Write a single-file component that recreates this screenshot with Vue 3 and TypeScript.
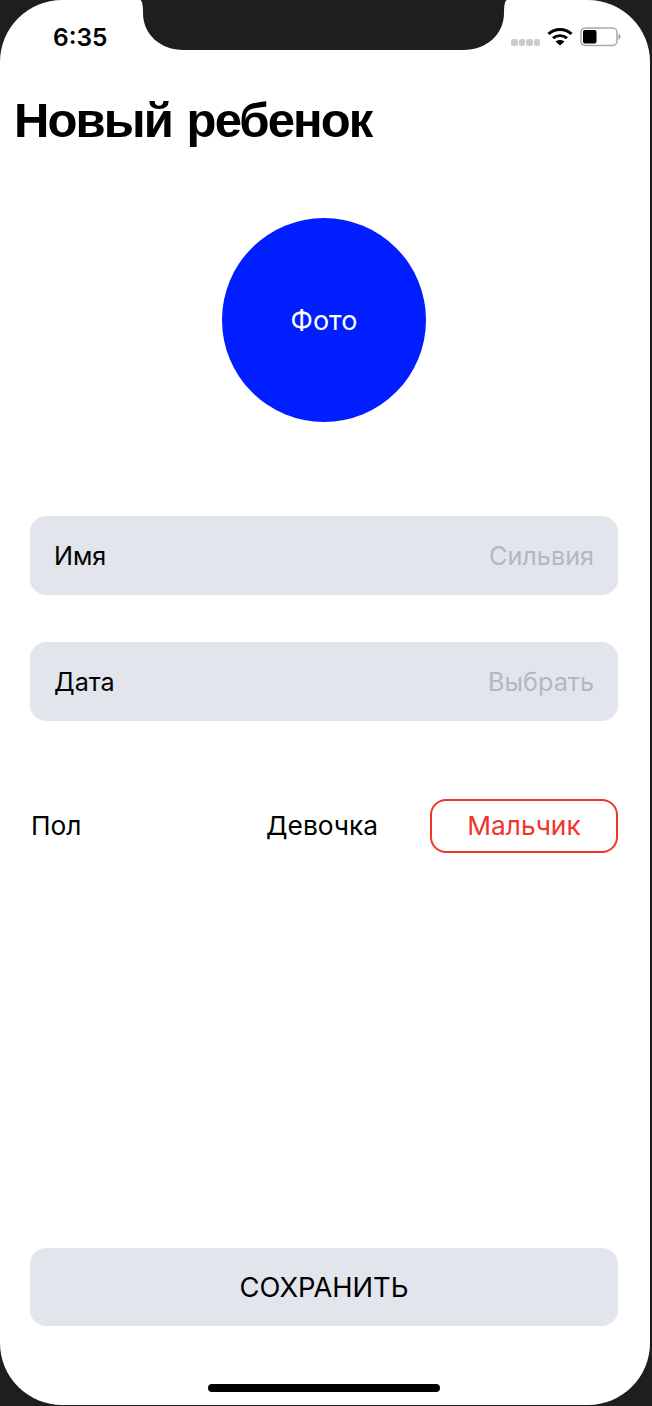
<script setup lang="ts">
interface Field {
  label: string
  hint: string
}

const fields: Field[] = [
  { label: 'Имя', hint: 'Сильвия' },
  { label: 'Дата', hint: 'Выбрать' }
]
</script>

<template>
  <div class="phone">
    <div class="screen">
      <header class="status">
        <span class="time">6:35</span>
        <div class="status-icons">
          <div class="signal"><i></i><i></i><i></i><i></i></div>
          <svg class="wifi" width="26" height="19" viewBox="0 0 26 19">
            <path d="M1.5 7C8 1 18 1 24.5 7" fill="none" stroke="#000" stroke-width="3" />
            <path d="M6 11.2C10.2 7.8 15.8 7.8 20 11.2" fill="none" stroke="#000" stroke-width="3" />
            <path d="M13 18.5L8.6 14.6C11.2 12.6 14.8 12.6 17.4 14.6Z" fill="#000" />
          </svg>
          <svg class="battery" width="42" height="20" viewBox="0 0 42 20">
            <rect x="1" y="1" width="36" height="17.5" rx="4.5" fill="none" stroke="#a8a8a8" stroke-width="1.5" />
            <rect x="3" y="3" width="13.5" height="13.5" rx="2" fill="#000" />
            <path d="M38.5 7C41 7.5 41 12 38.5 12.5Z" fill="#9a9a9a" />
          </svg>
        </div>
      </header>
      <svg class="notch" width="367" height="50" viewBox="0 0 367 50">
        <path d="M0 0C2 0 3 5 3 13C3 34 20 50 44 50H323C347 50 364 34 364 13C364 5 365 0 367 0Z" fill="#1e1e1e" />
      </svg>

      <h1 class="title">Новый ребенок</h1>

      <div class="photo">Фото</div>

      <div class="fields">
        <div v-for="field in fields" :key="field.label" class="field">
          <span>{{ field.label }}</span>
          <span class="hint">{{ field.hint }}</span>
        </div>
      </div>

      <div class="gender">
        <span class="gender-label">Пол</span>
        <span class="option">Девочка</span>
        <span class="option selected">Мальчик</span>
      </div>

      <button class="save">СОХРАНИТЬ</button>
      <div class="home-bar"></div>
    </div>
  </div>
</template>

<style>
html,
body {
  margin: 0;
  background: #1e1e1e;
}
</style>

<style scoped>
.phone {
  width: 652px;
  height: 1406px;
  background: #1e1e1e;
  overflow: hidden;
}

.screen {
  position: relative;
  display: flex;
  flex-direction: column;
  width: 650px;
  height: 1405px;
  background: #fff;
  border-radius: 62px;
  font-family: Inter, "Noto Sans", sans-serif;
  color: #000;
}

.status {
  display: flex;
  justify-content: space-between;
  height: 50px;
  padding: 0 28px 0 53px;
}

.time {
  margin-top: 22px;
  font-size: 24.5px;
  line-height: 30px;
  font-weight: 600;
}

.status-icons {
  display: flex;
  align-items: flex-start;
  gap: 7px;
  height: 20px;
  margin-top: 27px;
}

.signal {
  display: flex;
  gap: 1px;
  margin-top: 12px;
}

.signal i {
  width: 6.5px;
  height: 7px;
  border-radius: 2px;
  background: #ccc;
}

.notch {
  position: absolute;
  top: 0;
  left: 140px;
}

.title {
  margin: 41px 0 0 14px;
  font-family: "Liberation Sans", sans-serif;
  font-size: 49px;
  line-height: 58px;
  font-weight: 700;
  letter-spacing: -1.9px;
  word-spacing: 3px;
}

.photo {
  display: flex;
  align-items: center;
  justify-content: center;
  align-self: center;
  width: 204px;
  height: 204px;
  margin: 69px 0 0 -2px;
  border-radius: 50%;
  background: #001eff;
  color: #fff;
  font-size: 27px;
}

.fields {
  display: flex;
  flex-direction: column;
  gap: 47.5px;
  margin: 94px 32px 0 30px;
}

.field {
  display: flex;
  align-items: center;
  justify-content: space-between;
  box-sizing: border-box;
  height: 78.5px;
  padding: 1px 24px 0;
  border-radius: 16px;
  background: #e2e5ec;
  font-size: 25.2px;
}

.hint {
  color: #b4b7bf;
}

.gender {
  display: flex;
  align-items: center;
  margin: 78.5px 32px 0 31px;
  font-size: 26.3px;
}

.gender-label {
  flex: 1;
  padding-bottom: 2px;
}

.option {
  margin-right: 52px;
  padding-bottom: 2px;
}

.option.selected {
  display: flex;
  align-items: center;
  justify-content: center;
  box-sizing: border-box;
  width: 188px;
  height: 54px;
  margin-right: 0;
  border: 2px solid #f0352b;
  border-radius: 16px;
  color: #f0352b;
}

.save {
  height: 78.5px;
  margin: auto 32px 0 30px;
  padding: 1px 0 0;
  border: 0;
  border-radius: 16px;
  background: #e2e5ec;
  color: #000;
  font-family: inherit;
  font-size: 27.3px;
}

.home-bar {
  width: 232px;
  height: 8px;
  margin: 58px 0 13px 208px;
  border-radius: 4px;
  background: #000;
}
</style>
